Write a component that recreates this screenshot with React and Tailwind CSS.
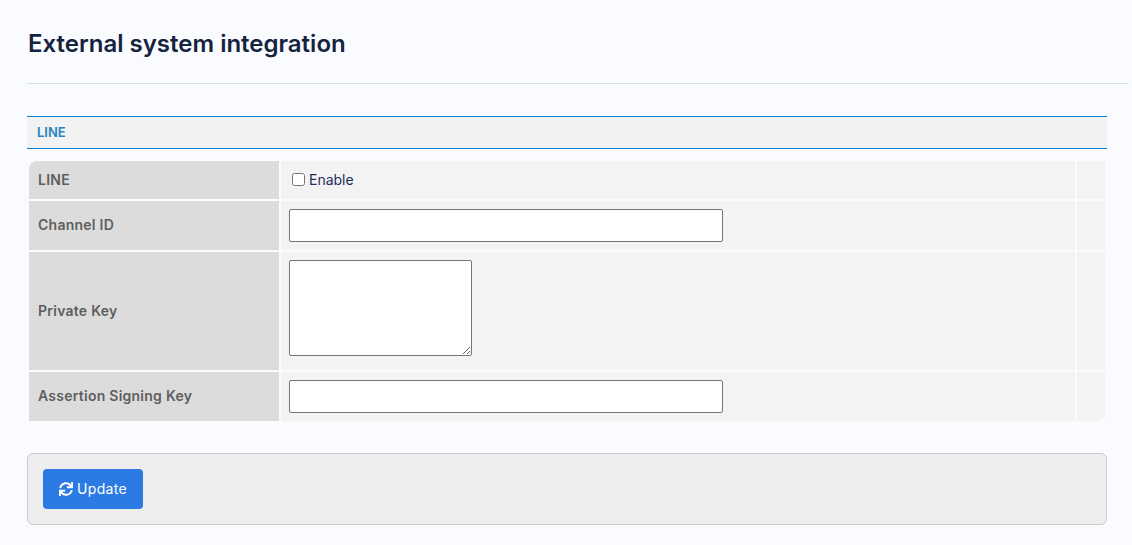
import React from "react";
import { FaSync } from "react-icons/fa";

const Label = ({ children, className = "" }) => (
  <div className={`bg-[#dcdcdc] flex items-center pl-[9px] pb-[2px] text-[14px] font-semibold tracking-[0.25px] text-[#5e5e5e] ${className}`}>{children}</div>
);
const Cell = ({ children, className = "" }) => (
  <div className={`bg-[#f3f3f3] flex items-center pl-2 ${className}`}>{children}</div>
);

export default function App() {
  return (
    <div className="min-h-[545px] bg-[#fafbfe] overflow-hidden font-['Inter',sans-serif] pl-[27px] pr-[3px]">
      <div className="h-[84px] border-b border-[#d8e2ef] flex items-start">
        <h1 className="mt-[27px] ml-px text-[24px] leading-[34px] font-semibold text-[#14233f]">External system integration</h1>
      </div>
      <div className="w-[1080px] mt-8">
        <div className="h-[33px] border-y border-[#0a84cc] bg-[#f2f2f2] flex items-center pl-[10px] pt-[1px] text-[13px] font-semibold text-[#2a82c4]">LINE</div>
        <div className="mt-3 mx-[2px] grid grid-cols-[250px_794px_28px] grid-rows-[38px_49px_118px_49px] gap-[2px] rounded-tl-lg rounded-br-lg overflow-hidden">
          <Label>LINE</Label>
          <Cell className="pl-[11px]">
            <label className="flex items-center text-[14px] text-[#1f2f5c] pb-[1px]">
              <input type="checkbox" className="w-[13px] h-[13px] mr-[4px] mb-[1px]" />
              Enable
            </label>
          </Cell>
          <Cell />
          <Label>Channel ID</Label>
          <Cell><input className="w-[434px] h-[33px] bg-white border border-[#767676] rounded-[2px]" /></Cell>
          <Cell />
          <Label>Private Key</Label>
          <Cell className="items-start pt-2"><textarea className="w-[183px] h-[96px] bg-white border border-[#767676] rounded-[2px] block" /></Cell>
          <Cell />
          <Label>Assertion Signing Key</Label>
          <Cell><input className="w-[434px] h-[33px] bg-white border border-[#767676] rounded-[2px]" /></Cell>
          <Cell />
        </div>
        <div className="mt-8 h-[72px] bg-[#eeeeee] border border-[#cccccc] rounded-md flex items-center pl-[15px]">
          <button className="w-[100px] h-[40px] bg-[#2c7be5] rounded-[4px] text-white text-[14px] tracking-[0.3px] flex items-center justify-center gap-[4px] pb-[1px]">
            <FaSync className="w-[14px] h-[14px]" />
            Update
          </button>
        </div>
      </div>
    </div>
  );
}
